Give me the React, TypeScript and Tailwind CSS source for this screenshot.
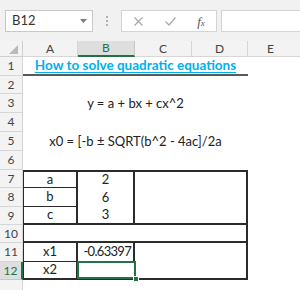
import React from "react";

const hdr = "bg-[#f3f3f3] text-[#444] text-[12px] flex items-center justify-center";

export default function App() {
  const rows = [1, 2, 3, 4, 5, 6, 7, 8, 9, 10, 11, 12, 13];
  return (
    <div className="w-[300px] h-[290px] overflow-hidden bg-white font-['Lato',sans-serif] text-[#222]">
      {/* formula bar */}
      <div className="h-[41px] bg-[#f1f1f1] flex items-start pt-[10px] pl-[5px]">
        <div className="w-[88px] h-[22px] bg-white border border-[#c9c9c9] flex items-center justify-between pl-[6px] pr-[5px]">
          <span className="text-[13px] text-[#333]">B12</span>
          <svg width="7" height="4" viewBox="0 0 7 4">
            <path d="M0 0 H7 L3.5 4 Z" fill="#7a7a7a" />
          </svg>
        </div>
        <div className="w-[28px] h-[22px] flex flex-col items-center justify-center gap-[2px]">
          <div className="w-[2px] h-[2px] bg-[#b0b0b0]" />
          <div className="w-[2px] h-[2px] bg-[#b0b0b0]" />
          <div className="w-[2px] h-[2px] bg-[#b0b0b0]" />
        </div>
        <div className="w-[96px] h-[22px] bg-white border border-[#d4d4d4] flex items-center">
          <div className="w-[32px] flex justify-center">
            <svg width="9" height="9" viewBox="0 0 9 9">
              <path d="M0.5 0.5 L8.5 8.5 M8.5 0.5 L0.5 8.5" stroke="#a9a9a9" strokeWidth="1.2" />
            </svg>
          </div>
          <div className="w-[32px] flex justify-center">
            <svg width="11" height="9" viewBox="0 0 11 9">
              <path d="M0.5 4.5 L4 8 L10.5 0.5" stroke="#a9a9a9" strokeWidth="1.2" fill="none" />
            </svg>
          </div>
          <div className="w-[30px] flex justify-center">
            <span className="italic font-['Liberation_Serif',serif] text-[13px] text-[#555] leading-none">
              f<span className="text-[9px]">x</span>
            </span>
          </div>
        </div>
        <div className="ml-[4px] flex-1 h-[22px] bg-white border border-[#d4d4d4] border-r-0" />
      </div>

      {/* sheet grid */}
      <div className="grid grid-cols-[23px_55px_57px_57px_56px_1fr] grid-rows-[16px_19px_18px_19px_19px_19px_19px_18px_19px_18px_18px_19px_18px_19px]">
        {/* corner */}
        <div className="col-start-1 row-start-1 bg-[#f3f3f3] border-r border-b border-[#cfcfcf] relative">
          <svg className="absolute right-[4px] bottom-[2px]" width="9" height="9" viewBox="0 0 9 9">
            <path d="M9 0 V9 H0 Z" fill="#b9b9b9" />
          </svg>
        </div>
        <div className={`col-start-2 row-start-1 ${hdr} border-r border-b border-[#d6d6d6]`}>A</div>
        <div className="col-start-3 row-start-1 bg-[#dedede] text-[#217346] text-[12px] flex items-center justify-center border-r border-[#c6c6c6] border-b-2 border-b-[#217346]">B</div>
        <div className={`col-start-4 row-start-1 ${hdr} border-r border-b border-[#d6d6d6]`}>C</div>
        <div className={`col-start-5 row-start-1 ${hdr} border-r border-b border-[#d6d6d6]`}>D</div>
        <div className={`col-start-6 row-start-1 ${hdr} border-b border-[#d6d6d6] justify-start pl-[19px]`}>E</div>

        {/* row headers */}
        {rows.map((r) =>
          r === 12 ? (
            <div
              key={r}
              className="col-start-1 bg-[#dedede] text-[#217346] text-[12px] flex items-center justify-center border-b border-[#c6c6c6] border-r-2 border-r-[#217346]"
              style={{ gridRowStart: r + 1 }}
            >
              {r}
            </div>
          ) : (
            <div
              key={r}
              className={`col-start-1 ${hdr} border-b border-r border-[#d6d6d6]`}
              style={{ gridRowStart: r + 1 }}
            >
              {r === 13 ? "" : r}
            </div>
          )
        )}

        {/* row 1 title */}
        <div className="col-start-2 col-span-4 row-start-2 border-b-2 border-[#5a5a5a] flex items-center justify-center">
          <span className="text-[13.5px] font-bold text-[#00b0f0] underline underline-offset-[2px]">
            How to solve quadratic equations
          </span>
        </div>
        {/* row 3 */}
        <div className="col-start-2 col-span-4 row-start-4 flex items-center justify-center text-[13px]">
          y = a + bx + cx^2
        </div>
        {/* row 5 */}
        <div className="col-start-2 col-span-4 row-start-6 flex items-center justify-center text-[13px]">
          x0 = [-b ± SQRT(b^2 - 4ac]/2a
        </div>

        {/* rows 7-9 */}
        <div className="col-start-2 row-start-8 border-t-2 border-l border-b border-r-2 border-[#2b2b2b] flex items-center justify-center text-[13px]">a</div>
        <div className="col-start-2 row-start-9 border-l border-b border-r-2 border-[#2b2b2b] flex items-center justify-center text-[13px]">b</div>
        <div className="col-start-2 row-start-10 border-l border-b-2 border-r-2 border-[#2b2b2b] flex items-center justify-center text-[13px]">c</div>
        <div className="col-start-3 row-start-8 border-t-2 border-r-2 border-[#2b2b2b] flex items-center justify-center text-[13px]">2</div>
        <div className="col-start-3 row-start-9 border-r-2 border-[#2b2b2b] flex items-center justify-center text-[13px]">6</div>
        <div className="col-start-3 row-start-10 border-b-2 border-r-2 border-[#2b2b2b] flex items-center justify-center text-[13px]">3</div>
        <div className="col-start-4 col-span-2 row-start-8 row-span-3 border-t-2 border-b-2 border-r-2 border-[#2b2b2b]" />

        {/* row 10 */}
        <div className="col-start-2 col-span-4 row-start-11 border-l border-b-2 border-r-2 border-[#2b2b2b]" />

        {/* rows 11-12 */}
        <div className="col-start-2 row-start-12 border-l border-b border-r-2 border-[#2b2b2b] flex items-center justify-center text-[13px]">x1</div>
        <div className="col-start-3 row-start-12 border-r-2 border-b border-[#2b2b2b] flex items-center justify-end pr-[2px] text-[13px] tracking-[-0.7px]">-0.63397</div>
        <div className="col-start-4 col-span-2 row-start-12 row-span-2 border-b-2 border-r-2 border-[#2b2b2b]" />
        <div className="col-start-2 row-start-13 border-l border-b-2 border-r-2 border-[#2b2b2b] flex items-center justify-center text-[13px]">x2</div>
        <div className="col-start-3 row-start-13 border-b-2 border-[#2b2b2b] relative z-10">
          <div className="absolute -left-[1px] -top-[1px] -right-[1px] -bottom-[1px] border-2 border-[#217346]" />
          <div className="absolute -right-[4px] -bottom-[4px] w-[6px] h-[6px] bg-[#217346] border border-white" />
        </div>
      </div>
    </div>
  );
}
